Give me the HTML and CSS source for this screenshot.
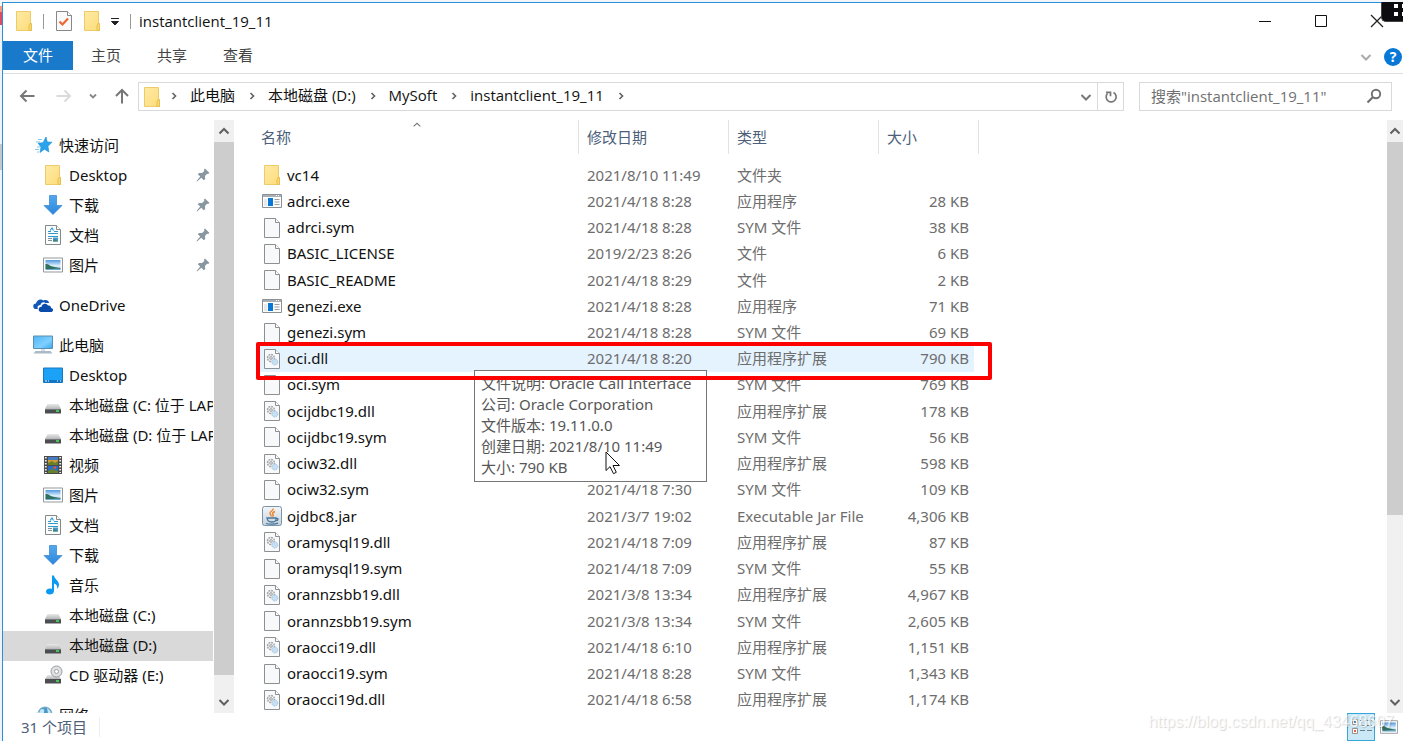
FILE: index.html
```html
<!DOCTYPE html>
<html lang="zh-CN">
<head>
  <meta charset="UTF-8">
  <meta name="viewport" content="width=device-width, initial-scale=1.0">
  <title>instantclient_19_11</title>
  <link rel="stylesheet" href="styles.css">
</head>
<body>
  <!-- icon definitions -->
  <svg class="defs" aria-hidden="true">
    <linearGradient id="gFolder" x1="0" y1="0" x2="1" y2="1"><stop offset="0" stop-color="#ffeba6"/><stop offset="1" stop-color="#fddb79"/></linearGradient>
    <linearGradient id="gArrow" x1="0" y1="0" x2="0" y2="1"><stop offset="0" stop-color="#55a8ee"/><stop offset="1" stop-color="#2b86dc"/></linearGradient>
    <linearGradient id="gScreen" x1="0" y1="0" x2="1" y2="1"><stop offset="0" stop-color="#4fb4f5"/><stop offset="0.6" stop-color="#7fd0ff"/><stop offset="1" stop-color="#3ba5ee"/></linearGradient>
    <linearGradient id="gDrive" x1="0" y1="0" x2="0" y2="1"><stop offset="0" stop-color="#e9e9e9"/><stop offset="1" stop-color="#b5b7b8"/></linearGradient>
    <linearGradient id="gSky" x1="0" y1="0" x2="0" y2="1"><stop offset="0" stop-color="#4f97e0"/><stop offset="0.6" stop-color="#e4f3fc"/><stop offset="1" stop-color="#5d9fcf"/></linearGradient>
    <linearGradient id="gJar" x1="0" y1="0" x2="0" y2="1"><stop offset="0" stop-color="#f4f6f8"/><stop offset="1" stop-color="#c6d0da"/></linearGradient>
    <symbol id="folder" viewBox="0 0 20 20"><path d="M2.5.5h14v14.500l1 .5v4h-15z" fill="url(#gFolder)" stroke="#edcb68"/><path d="M15 19.500v-5l1-2h1.500v7z" fill="#f8d873" stroke="#e6bf50"/></symbol>
    <symbol id="file" viewBox="0 0 20 20"><path d="M2.500.5h11l4 4v15h-15z" fill="#f8f9fa" stroke="#8d9092"/><path d="M13.500.5v4h4" fill="#fff" stroke="#8d9092"/></symbol>
    <symbol id="dll" viewBox="0 0 20 20"><path d="M2.500.5h11l4 4v15h-15z" fill="#f8f9fa" stroke="#8d9092"/><path d="M13.500.5v4h4" fill="#fff" stroke="#8d9092"/><circle cx="9" cy="9" r="3.500" fill="#eef0f2" stroke="#a0a5aa" stroke-width="1.500" stroke-dasharray="1.800 .9"/><circle cx="9" cy="9" r="1.300" fill="#fff" stroke="#999"/><circle cx="12.800" cy="13" r="3" fill="#c6dff3" stroke="#a5c5e0" stroke-dasharray="1.500 .7"/></symbol>
    <symbol id="exe" viewBox="0 0 20 20"><path d="M.5 3.500h19v13H.5z" fill="#fdfdfd" stroke="#8b9095"/><path d="M1 4h18v2H1z" fill="#a9afb4"/><path d="M14 4.500h1M16 4.500h1" stroke="#fff"/><path d="M6 7h5v8H6z" fill="#0878d7"/><path d="M12.500 8.500h5M12.500 11h5M12.500 13.500h5" stroke="#999fa5"/><path d="M2 8h3v7H2z" fill="#e7e9eb"/></symbol>
    <symbol id="jar" viewBox="0 0 20 20"><rect x=".5" y=".5" width="19" height="19" rx="2" fill="url(#gJar)" stroke="#7894aa"/><path d="M11 2.500c1 2.500-4 3-3 5 .4 1 1.500 1.500 1 3M13 5.500c-2.500 1-3 2-2 3.200.7.900.2 1.500-.6 2" fill="none" stroke="#ed822b" stroke-width="1.400"/><path d="M5 12h9v1.500c0 2-2 2.500-4.500 2.500S5.500 15 5 12zM14 12.500c3-.7 2.500 2-.5 2.200M4 17.500c3 1 9 1 12-.3" fill="none" stroke="#47769c" stroke-width="1.300"/></symbol>
    <symbol id="down" viewBox="0 0 20 20"><path d="M6.500.5h7v10h5.500L10 19.500 1 10.500h5.500z" fill="url(#gArrow)" stroke="#3283cd" stroke-width=".7"/></symbol>
    <symbol id="doc" viewBox="0 0 20 20"><path d="M2.500.5h11l4 4v15h-15z" fill="#fbfcfc" stroke="#84898c"/><path d="M13.500.5v4h4" fill="#fff" stroke="#84898c"/><path d="M5 8.500h10M5 13.500h4M5 15.500h4" stroke="#83909a"/><path d="M5 6.500h3M11 6.500h4M5 11.500h10" stroke="#2e9ad0"/><path d="M7 5.500 9 3l1.500 2.500M6 8.500h8" fill="none" stroke="#2e9ad0" stroke-width="1.200"/><path d="M10 12.500h5v4h-5z" fill="#4a98cb"/><path d="m10 15 2-1 3 2.500h-5z" fill="#45856f"/></symbol>
    <symbol id="picture" viewBox="0 0 20 20"><path d="M.5 3h19v14H.5z" fill="#fff" stroke="#93989b"/><path d="M2.500 5h15v10h-15z" fill="url(#gSky)"/><path d="M2.500 9c3-.5 4 2 7 2.500s4 1 8 1.500v.8c-5-.5-9 .5-15 .2z" fill="#31705f"/></symbol>
    <symbol id="star" viewBox="0 0 20 20"><path d="m13 2 1.300 5 4.700.2-4 4 .8 5.800L11.500 14.200 7 17.500l1-5.500L5 8.200l5-.5z" fill="#2ba3ec" stroke="#188bd3" stroke-width=".6"/><path d="M5 4.500H9M3 7h4M4 12H7M2 14.500h4M4 17H6" stroke="#81c8f1"/></symbol>
    <symbol id="cloud" viewBox="0 0 20 20"><path d="M2 14C-.8 12.500-.2 8.500 3 8.500 3.500 5 7.500 3 10.500 5.500c3-1.300 5 .2 5.700 2.500h-3.500C10.500 6.500 8 7.500 7.500 10 4.500 10 4 12.500 5 14z" fill="#1258b8"/><path d="M8 17c-3.500-.5-3-5.200.5-5.200.3-3.500 5-4.300 6.500-1.200 2-.4 3 .8 3 2.300 3 .3 2.500 4.100 0 4.100z" fill="#0a4bac"/></symbol>
    <symbol id="pc" viewBox="0 0 20 20"><path d="M.5 1h19v12.500H.5z" fill="url(#gScreen)" stroke="#5b8fae"/><path d="M8 14h4v2H8z" fill="#d5dde3"/><path d="M2.500 16h15l2 2.500H.5z" fill="#aabac6"/></symbol>
    <symbol id="desktop" viewBox="0 0 20 20"><path d="M.5 3h19v14.500H.5z" fill="#1ba1f6" stroke="#1a79bd"/><path d="M1 15h18v2.500H1z" fill="#1176c3"/><path d="M2 16h2M5 16h1M14 16h1M17 16h1" stroke="#fff"/></symbol>
    <symbol id="drive" viewBox="0 0 20 20"><path d="M4.500 9h11l2.500 5H2z" fill="url(#gDrive)"/><path d="M2 14h16v4.500H2z" fill="#4a4e50"/><path d="M2 14.500h16" stroke="#75797b"/><path d="M13 16h3" stroke="#45ef58" stroke-width="1.500"/></symbol>
    <symbol id="cd" viewBox="0 0 20 20"><path d="M4.500 10h11l2.500 4H2z" fill="url(#gDrive)"/><path d="M2 14h16v4.500H2z" fill="#4a4e50"/><path d="M13 16h3" stroke="#45ef58" stroke-width="1.500"/><circle cx="13.500" cy="6.500" r="5.500" fill="#e0e1e1" stroke="#989c9e"/><circle cx="13.500" cy="6.500" r="2" fill="#fff" stroke="#9ca1a4"/></symbol>
    <symbol id="video" viewBox="0 0 20 20"><path d="M1 1h18v18H1z" fill="#4a4a4d"/><path d="M5 2h10v8H5z" fill="#d49b32"/><path d="M5 2h10v3H5z" fill="#477bc2"/><path d="M5 11h10v7H5z" fill="#286cc5"/><path d="m5 8 4-2 3 2 3-2v4H5zM5 16l4-2 6 2v2H5z" fill="#65812b"/><path d="m9 13 4-2v3z" fill="#dc5637"/><path d="M2.800 2v16M17.200 2v16" stroke="#eee" stroke-width="1.800" stroke-dasharray="1.500 1.500"/></symbol>
    <symbol id="music" viewBox="0 0 20 20"><path d="M9 .5h2c.5 4 5 5 5 9 0 2-1 3.500-2 4.500 1-3-1-5-3-5.500V16c0 4.500-8 4.500-8 .8C3 14 6.500 13 9 14z" fill="#0b9af2"/></symbol>
    <symbol id="globe" viewBox="0 0 20 20"><circle cx="12" cy="9" r="7" fill="#4999c9" stroke="#80acc5"/><path d="M7 5c3-2 5-1 4 2s-4 4-5 2zM14 3c2 1 4 3 4 6l-3-1z" fill="#c3e6f4"/><path d="M2 8h9v8H2z" fill="#63b5e8" stroke="#d3e4ee"/></symbol>
    <symbol id="pin" viewBox="0 0 14 14"><path d="m9 .5 4.500 4.500-1.500 1-1-.3L9 8l.2 3-1.400 1.200-2.500-2.500L1 13.500.5 13l3.700-4.500L1.800 6.200 3 5l3 .1 2.300-2.200L8 1.500z" fill="#8997a1"/></symbol>
    <symbol id="chevDown" viewBox="0 0 12 12"><path d="m1.500 4 4.500 4.500 4.500-4.500" fill="none" stroke="currentColor" stroke-width="2"/></symbol>
    <symbol id="chevUp" viewBox="0 0 12 12"><path d="m1.500 8.500 4.500-4.500 4.500 4.500" fill="none" stroke="currentColor" stroke-width="2"/></symbol>
    <symbol id="chevRight" viewBox="0 0 12 12"><path d="m4.500 3 3 3-3 3" fill="none" stroke="currentColor" stroke-width="1.700"/></symbol>
  </svg>

  <div class="window">
    <header class="titlebar">
      <svg class="icon"><use href="#folder"/></svg>
      <span class="sep"></span>
      <div class="quick">
        <button aria-label="属性"><svg class="icon" viewBox="0 0 20 20"><path d="M2.500.5h11l4 4v15h-15z" fill="#fafafa" stroke="#85898c"/><path d="M13.500.5v4h4" fill="#fff" stroke="#85898c"/><path d="m5.500 10.500 3 3L14 7.500" fill="none" stroke="#ee6631" stroke-width="2.200"/></svg></button>
        <button aria-label="新建文件夹"><svg class="icon"><use href="#folder"/></svg></button>
      </div>
      <button class="quick-more" aria-label="自定义快速访问工具栏"><svg class="chev" viewBox="0 0 12 12"><path d="M2 3.500h8M2.500 6.500h7L6 10z" fill="#222" stroke="#222"/></svg></button>
      <span class="sep"></span>
      <h1>instantclient_19_11</h1>
      <div class="win-buttons">
        <button aria-label="最小化"><svg viewBox="0 0 14 14"><path d="M1 7.500h12" stroke="#111" fill="none"/></svg></button>
        <button aria-label="最大化"><svg viewBox="0 0 14 14"><path d="M1.500 1.500h11v11h-11z" stroke="#111" fill="none"/></svg></button>
        <button aria-label="关闭"><svg viewBox="0 0 14 14"><path d="m1 1 12 12M13 1 1 13" stroke="#222" stroke-width="1.300" fill="none"/></svg></button>
      </div>
    </header>

    <nav class="ribbon">
      <button class="tab tab-file">文件</button>
      <button class="tab">主页</button>
      <button class="tab">共享</button>
      <button class="tab">查看</button>
      <button class="expand" aria-label="展开功能区"><svg class="chev"><use href="#chevDown"/></svg></button>
      <button class="help" aria-label="帮助">?</button>
    </nav>

    <div class="toolbar">
      <div class="history">
        <button aria-label="后退"><svg viewBox="0 0 16 16"><path d="M15.500 8H2M7.500 2.500 2 8l5.500 5.500" fill="none" stroke="#777" stroke-width="2"/></svg></button>
        <button aria-label="前进" disabled><svg viewBox="0 0 16 16"><path d="M.5 8H14M8.500 2.500 14 8l-5.500 5.500" fill="none" stroke="#dadada" stroke-width="2"/></svg></button>
        <button class="recent" aria-label="最近浏览的位置"><svg viewBox="0 0 12 12"><path d="m3 4.500 3 3 3-3" fill="none" stroke="#888" stroke-width="1.800"/></svg></button>
        <button aria-label="上移"><svg viewBox="0 0 16 16"><path d="M8 15.500V2M2 8l6-6 6 6" fill="none" stroke="#777" stroke-width="2"/></svg></button>
      </div>
      <div class="address">
        <svg class="icon"><use href="#folder"/></svg>
        <svg class="crumb-arrow"><use href="#chevRight"/></svg>
        <button>此电脑</button>
        <svg class="crumb-arrow"><use href="#chevRight"/></svg>
        <button>本地磁盘 (D:)</button>
        <svg class="crumb-arrow"><use href="#chevRight"/></svg>
        <button>MySoft</button>
        <svg class="crumb-arrow"><use href="#chevRight"/></svg>
        <button>instantclient_19_11</button>
        <svg class="crumb-arrow"><use href="#chevRight"/></svg>
        <button class="drop" aria-label="以前的位置"><svg class="chev"><use href="#chevDown"/></svg></button>
        <button class="refresh" aria-label="刷新"><svg viewBox="0 0 14 14"><path d="M9.500 2.500A5 5 0 1 1 3.500 3.500M2 2.300h4.500v4" fill="none" stroke="#777" stroke-width="1.700"/></svg></button>
      </div>
      <label class="search">
        <input type="text" placeholder='搜索"instantclient_19_11"' aria-label="搜索">
        <svg viewBox="0 0 16 16"><circle cx="10" cy="6" r="4.200" fill="none" stroke="#707070" stroke-width="1.900"/><path d="M7 9 1.500 14.500" stroke="#707070" stroke-width="2.200"/></svg>
      </label>
    </div>

    <main class="content">
      <aside class="tree">
        <a class="top" href="#"><svg class="icon"><use href="#star"/></svg>快速访问</a>
        <a href="#"><svg class="icon"><use href="#folder"/></svg><span>Desktop</span><svg class="pin"><use href="#pin"/></svg></a>
        <a href="#"><svg class="icon"><use href="#down"/></svg><span>下载</span><svg class="pin"><use href="#pin"/></svg></a>
        <a href="#"><svg class="icon"><use href="#doc"/></svg><span>文档</span><svg class="pin"><use href="#pin"/></svg></a>
        <a href="#"><svg class="icon"><use href="#picture"/></svg><span>图片</span><svg class="pin"><use href="#pin"/></svg></a>
        <a class="top group" href="#"><svg class="icon"><use href="#cloud"/></svg>OneDrive</a>
        <a class="top group" href="#"><svg class="icon"><use href="#pc"/></svg>此电脑</a>
        <a href="#"><svg class="icon"><use href="#desktop"/></svg><span>Desktop</span></a>
        <a href="#"><svg class="icon"><use href="#drive"/></svg><span>本地磁盘 (C: 位于 LAPTOP)</span></a>
        <a href="#"><svg class="icon"><use href="#drive"/></svg><span>本地磁盘 (D: 位于 LAPTOP)</span></a>
        <a href="#"><svg class="icon"><use href="#video"/></svg><span>视频</span></a>
        <a href="#"><svg class="icon"><use href="#picture"/></svg><span>图片</span></a>
        <a href="#"><svg class="icon"><use href="#doc"/></svg><span>文档</span></a>
        <a href="#"><svg class="icon"><use href="#down"/></svg><span>下载</span></a>
        <a href="#"><svg class="icon"><use href="#music"/></svg><span>音乐</span></a>
        <a href="#"><svg class="icon"><use href="#drive"/></svg><span>本地磁盘 (C:)</span></a>
        <a class="current" href="#"><svg class="icon"><use href="#drive"/></svg><span>本地磁盘 (D:)</span></a>
        <a href="#"><svg class="icon"><use href="#cd"/></svg><span>CD 驱动器 (E:)</span></a>
        <a class="top group" href="#"><svg class="icon"><use href="#globe"/></svg>网络</a>
      </aside>
      <div class="scrollbar tree-scroll">
        <button aria-label="向上滚动"><svg class="chev"><use href="#chevUp"/></svg></button>
        <div class="track"><div class="thumb"></div></div>
        <button aria-label="向下滚动"><svg class="chev"><use href="#chevDown"/></svg></button>
      </div>

      <section class="files">
        <table>
          <thead>
            <tr>
              <th class="name"><button>名称</button><svg class="sort" viewBox="0 0 12 12"><path d="m1.500 8.500 4.500-4 4.500 4" fill="none" stroke="#777" stroke-width="1.500"/></svg></th>
              <th class="date"><button>修改日期</button></th>
              <th class="type"><button>类型</button></th>
              <th class="size"><button>大小</button></th>
              <th class="rest"></th>
            </tr>
          </thead>
          <tbody>
            <tr><td><svg class="icon"><use href="#folder"/></svg>vc14</td><td>2021/8/10 11:49</td><td>文件夹</td><td></td></tr>
            <tr><td><svg class="icon"><use href="#exe"/></svg>adrci.exe</td><td>2021/4/18 8:28</td><td>应用程序</td><td>28 KB</td></tr>
            <tr><td><svg class="icon"><use href="#file"/></svg>adrci.sym</td><td>2021/4/18 8:28</td><td>SYM 文件</td><td>38 KB</td></tr>
            <tr><td><svg class="icon"><use href="#file"/></svg>BASIC_LICENSE</td><td>2019/2/23 8:26</td><td>文件</td><td>6 KB</td></tr>
            <tr><td><svg class="icon"><use href="#file"/></svg>BASIC_README</td><td>2021/4/18 8:29</td><td>文件</td><td>2 KB</td></tr>
            <tr><td><svg class="icon"><use href="#exe"/></svg>genezi.exe</td><td>2021/4/18 8:28</td><td>应用程序</td><td>71 KB</td></tr>
            <tr><td><svg class="icon"><use href="#file"/></svg>genezi.sym</td><td>2021/4/18 8:28</td><td>SYM 文件</td><td>69 KB</td></tr>
            <tr class="hover">
              <td><svg class="icon"><use href="#dll"/></svg>oci.dll
                <div class="tooltip" role="tooltip">文件说明: Oracle Call Interface<br>公司: Oracle Corporation<br>文件版本: 19.11.0.0<br>创建日期: 2021/8/10 11:49<br>大小: 790 KB
                  <svg class="cursor" viewBox="0 0 16 24"><path d="M1 1v18.500l4-3.800 3.500 7 2.800-1.400L8 14.500h6.500z" fill="#fff" stroke="#111"/></svg>
                </div>
                <div class="marker"></div>
              </td>
              <td>2021/4/18 8:20</td><td>应用程序扩展</td><td>790 KB</td>
            </tr>
            <tr><td><svg class="icon"><use href="#file"/></svg>oci.sym</td><td></td><td>SYM 文件</td><td>769 KB</td></tr>
            <tr><td><svg class="icon"><use href="#dll"/></svg>ocijdbc19.dll</td><td></td><td>应用程序扩展</td><td>178 KB</td></tr>
            <tr><td><svg class="icon"><use href="#file"/></svg>ocijdbc19.sym</td><td></td><td>SYM 文件</td><td>56 KB</td></tr>
            <tr><td><svg class="icon"><use href="#dll"/></svg>ociw32.dll</td><td></td><td>应用程序扩展</td><td>598 KB</td></tr>
            <tr><td><svg class="icon"><use href="#file"/></svg>ociw32.sym</td><td>2021/4/18 7:30</td><td>SYM 文件</td><td>109 KB</td></tr>
            <tr><td><svg class="icon"><use href="#jar"/></svg>ojdbc8.jar</td><td>2021/3/7 19:02</td><td>Executable Jar File</td><td>4,306 KB</td></tr>
            <tr><td><svg class="icon"><use href="#dll"/></svg>oramysql19.dll</td><td>2021/4/18 7:09</td><td>应用程序扩展</td><td>87 KB</td></tr>
            <tr><td><svg class="icon"><use href="#file"/></svg>oramysql19.sym</td><td>2021/4/18 7:09</td><td>SYM 文件</td><td>55 KB</td></tr>
            <tr><td><svg class="icon"><use href="#dll"/></svg>orannzsbb19.dll</td><td>2021/3/8 13:34</td><td>应用程序扩展</td><td>4,967 KB</td></tr>
            <tr><td><svg class="icon"><use href="#file"/></svg>orannzsbb19.sym</td><td>2021/3/8 13:34</td><td>SYM 文件</td><td>2,605 KB</td></tr>
            <tr><td><svg class="icon"><use href="#dll"/></svg>oraocci19.dll</td><td>2021/4/18 6:10</td><td>应用程序扩展</td><td>1,151 KB</td></tr>
            <tr><td><svg class="icon"><use href="#file"/></svg>oraocci19.sym</td><td>2021/4/18 8:28</td><td>SYM 文件</td><td>1,343 KB</td></tr>
            <tr><td><svg class="icon"><use href="#dll"/></svg>oraocci19d.dll</td><td>2021/4/18 6:58</td><td>应用程序扩展</td><td>1,174 KB</td></tr>
          </tbody>
        </table>
      </section>
      <div class="scrollbar files-scroll">
        <button aria-label="向上滚动"><svg class="chev"><use href="#chevUp"/></svg></button>
        <div class="track"><div class="thumb"></div></div>
        <button aria-label="向下滚动"><svg class="chev"><use href="#chevDown"/></svg></button>
      </div>
    </main>

    <footer class="status">
      <span class="count">31 个项目</span>
      <div class="views">
        <button class="on" aria-label="详细信息"><svg viewBox="0 0 22 18"><path d="M2.500 1.500h5v5h-5zM2.500 10.500h5v5h-5z" fill="#fff" stroke="#9a8f8c"/><path d="M4 4h2" stroke="#4388c8" stroke-width="2"/><path d="M4 13h2" stroke="#e25c4b" stroke-width="2"/><path d="M10 2.500h5M17 2.500h5M10 7.500h5M17 7.500h5M10 12.500h5M17 12.500h5" stroke="#6f7f88"/></svg></button>
        <button aria-label="大缩略图"><svg class="icon"><use href="#picture"/></svg></button>
      </div>
    </footer>
  </div>

  <div class="badge"><i></i><i></i><i></i><i></i></div>
  <div class="watermark">https://blog.csdn.net/qq_43468607</div>
</body>
</html>
```

FILE: styles.css
```css
* { box-sizing: border-box; }
body {
  margin: 0;
  height: 100vh;
  padding: 2px 0 0 2px;
  overflow: hidden;
  background: linear-gradient(#f3f6f8 6px, #f49b7b 6px 12px, #e04a62 12px 25px, #eef3f8 25px 144px, #c3c8cc 144px 170px, #eef3f8 170px);
  font: 15px/20px "Noto Sans", "Noto Sans CJK SC", sans-serif;
  color: #111;
}
button { border: 0; padding: 0; background: none; font: inherit; color: inherit; }
svg { flex: none; }
.defs { position: absolute; width: 0; height: 0; }
.icon { width: 20px; height: 20px; }
.chev { width: 12px; height: 12px; display: block; }

.window {
  height: 100%;
  display: flex;
  flex-direction: column;
  background: #fff;
  border: solid #2b90dc;
  border-width: 1px 0 0 1px;
}

/* title bar */
.titlebar { height: 38px; display: flex; align-items: center; padding: 0 0 2px 11px; }
.titlebar .sep { width: 1px; height: 15px; margin: 0 8px 0 9px; background: #999; }
.titlebar h1, .address, .search { font: 15px/20px "Open Sans", "Noto Sans CJK SC", sans-serif; }
.titlebar h1 { margin: 0; }
.quick { display: flex; gap: 8px; padding: 0 7px 0 2px; }
.quick button { display: flex; }
.win-buttons { display: flex; margin-left: auto; }
.win-buttons button { width: 56px; height: 36px; display: flex; align-items: center; justify-content: center; }
.win-buttons svg { width: 14px; height: 14px; }
.win-buttons button:last-child { width: 54px; padding-left: 2px; }

/* ribbon tabs */
.ribbon { height: 33px; display: flex; align-items: flex-start; border-bottom: 1px solid #dcdfe2; }
.tab { width: 66px; height: 29px; padding-bottom: 2px; color: #444; }
.tab-file { width: 70px; background: #1979ca; color: #fff; }
.expand { margin-left: auto; padding: 10px 12px 0 0; color: #aaa; }
.help { width: 18px; height: 18px; margin: 7px 1px 0 0; border-radius: 50%; background: #0878d7; color: #fff; font-size: 14px; font-weight: bold; line-height: 18px; }

/* address row */
.toolbar { display: flex; align-items: center; padding: 8px 11px 9px 0; }
.history { display: flex; align-items: center; width: 135px; padding: 0 0 2px 16px; gap: 21px; }
.history svg { width: 16px; height: 16px; display: block; }
.history .recent { margin: 0 -6px; }
.history .recent svg { width: 12px; height: 12px; }
.address { flex: 1; height: 29px; display: flex; align-items: center; border: 1px solid #d9d9d9; padding-left: 3px; }
.address button { padding-bottom: 3px; }
.crumb-arrow { width: 12px; height: 12px; margin: 0 10px 2px 11px; color: #666; }
.icon + .crumb-arrow { margin-left: 6px; }
.address .drop { margin-left: auto; padding: 0 5px; color: #777; }
.address .refresh { width: 26px; height: 27px; padding: 0; display: flex; align-items: center; justify-content: center; border-left: 1px solid #d9d9d9; }
.refresh svg { width: 14px; height: 14px; }
.search { width: 253px; height: 29px; margin-left: 15px; display: flex; align-items: center; padding: 0 9px 2px 11px; border: 1px solid #d9d9d9; }
.search input { flex: 1; min-width: 0; border: 0; padding: 0; outline: 0; background: none; font: inherit; }
.search input::placeholder { color: #707070; opacity: 1; }
.search svg { width: 16px; height: 16px; }

.content { flex: 1; min-height: 0; display: flex; }

/* navigation tree */
.tree { width: 210px; padding-top: 11px; overflow: hidden; }
.tree a { display: flex; align-items: center; gap: 6px; height: 30px; padding: 0 0 2px 40px; color: inherit; text-decoration: none; white-space: nowrap; }
.tree a span { flex: 1; min-width: 0; overflow: hidden; }
.tree a.top { padding-left: 30px; }
.tree a.group { margin-top: 10px; }
.tree a.current { background: #d9d9d9; }
.pin { width: 14px; height: 14px; margin-right: 3px; }

.scrollbar { display: flex; flex-direction: column; background: #f0f0f0; color: #606060; }
.scrollbar button { height: 22px; display: flex; align-items: center; justify-content: center; }
.scrollbar .track { flex: 1; }
.scrollbar .thumb { background: #cdcdcd; }
.tree-scroll { width: 20px; margin-left: 1px; }
.tree-scroll .thumb { height: 97%; }
.files-scroll { width: 16px; }
.files-scroll .thumb { height: 68%; }

/* file list */
.files { flex: 1; padding-left: 24px; }
table { width: 100%; height: 100%; border-collapse: separate; border-spacing: 0; table-layout: fixed; white-space: nowrap; }
th { height: 42px; padding: 0 0 8px 8px; text-align: left; font-weight: normal; color: #4c607a; background: linear-gradient(#e2e2e2, #e2e2e2) top right / 1px 34px no-repeat; }
th.name { width: 321px; padding-left: 3px; position: relative; }
th.date, th.type { width: 150px; }
th.size { width: 100px; }
th.rest { background: none; }
.sort { position: absolute; left: 50%; top: 0; width: 12px; height: 9px; margin-left: -8px; }
td { padding: 0 0 1px 8px; color: #6d6d6d; }
td:first-child { padding-left: 4px; color: #111; }
td:nth-child(4) { padding: 0 5px 1px; border-right: 5px solid transparent; background-clip: padding-box; text-align: right; }
td .icon { display: inline-block; vertical-align: middle; margin: -6px 5px -3px 0; }
.hover { position: relative; }
.hover td { background-color: #e5f3ff; }

.marker { position: absolute; top: -4px; left: -2px; width: 736px; height: 38px; border: 4px solid #fe0000; border-radius: 2px; }
.tooltip {
  position: absolute;
  top: 24px;
  left: 216px;
  width: 233px;
  padding: 2px 6px 3px;
  border: 1px solid #767676;
  background: #fff;
  color: #575757;
  line-height: 21px;
}
.cursor { position: absolute; left: 130px; top: 80px; width: 16px; height: 24px; }

/* status bar */
.status { height: 28px; display: flex; align-items: center; justify-content: space-between; color: #4c607a; }
.count { padding: 0 12px 0 18px; border-right: 1px solid #eee; }
.views { display: flex; height: 100%; }
.views button { display: flex; align-items: center; justify-content: center; width: 28px; height: 28px; }
.views .on { border: 1px solid #35a7d8; background: #cbe8f6; }
.views .on svg { width: 22px; height: 18px; }
.views .icon { width: 18px; height: 18px; }

/* things floating above the window */
.badge {
  position: absolute;
  top: 2px;
  right: 0;
  width: 22px;
  height: 20px;
  padding: 2px 0 0 12px;
  display: grid;
  grid-template-columns: 4px 4px;
  grid-auto-rows: 4px;
  gap: 4px;
  overflow: hidden;
  background: #0b0b10;
  border: solid #444;
  border-width: 0 0 1px 1px;
  border-radius: 0 0 0 5px;
}
.badge i { background: #fff; }
.watermark { position: absolute; right: 9px; bottom: 9px; font: 16px/20px "Liberation Sans", sans-serif; color: rgba(255, 255, 255, 0.8); text-shadow: 1px 1px 1px rgba(0, 0, 0, 0.16); }
```
